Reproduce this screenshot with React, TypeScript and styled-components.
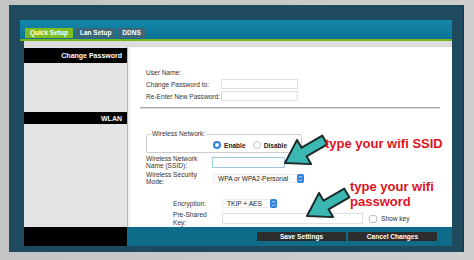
import styled, { createGlobalStyle } from 'styled-components';

const GlobalStyle = createGlobalStyle`
    html, body {
        margin: 0;
        padding: 0;
        background: #c9c9c9;
        font-family: 'Liberation Sans', Arial, sans-serif;
    }
`;

const Page = styled.div`
    width: 474px;
    height: 260px;
    box-sizing: border-box;
    padding: 5px 10px 8px 9px;
    background: linear-gradient(90deg, #c4c4c4, #cfcfcf);
`;

const Frame = styled.div`
    width: 455px;
    height: 247px;
    box-sizing: border-box;
    padding: 15px 11px 6px 11px;
    background: #1f4a5d;
    border-right: 1px solid #16384a;
    display: flex;
    flex-direction: column;
`;

const HeaderBand = styled.div`
    height: 19px;
    box-sizing: border-box;
    padding: 0 0 1px 5px;
    display: flex;
    align-items: flex-end;
    gap: 3px;
    background: linear-gradient(180deg, #1488ab, #0b7294);
`;

const Tab = styled.div<{ $active?: boolean }>`
    height: 10px;
    line-height: 10px;
    padding: 0 ${({ $active }) => ($active ? '5px' : '4px')};
    background: ${({ $active }) => ($active ? '#7fbd1e' : '#3f6676')};
    color: #fff;
    font-size: 6.5px;
    font-weight: bold;
    white-space: nowrap;
`;

const GreenLine = styled.div`
    height: 2px;
    background: #78b41a;
`;

const Strip = styled.div`
    height: 6px;
    margin-left: 4px;
    background: #dcdcdc;
`;

const Body = styled.div`
    height: 180px;
    margin-left: 4px;
    display: flex;
`;

const Sidebar = styled.div`
    width: 103px;
    background: #e4e4e4;
    display: flex;
    flex-direction: column;
`;

const SideHead = styled.div<{ $gap: number; $h: number }>`
    height: ${({ $h }) => $h}px;
    margin-top: ${({ $gap }) => $gap}px;
    background: #000;
    color: #fff;
    font-size: 7px;
    font-weight: bold;
    display: flex;
    align-items: center;
    justify-content: flex-end;
    padding-right: 5px;
`;

const Main = styled.div`
    flex: 1;
    position: relative;
    background: #fff;
    border-left: 1px solid #b8b8b8;
    box-shadow: inset 2px 0 2px rgba(0, 0, 0, 0.08);
    padding-left: 18px;
    display: flex;
    flex-direction: column;
    color: #333;
    font-size: 6.6px;
`;

const Row = styled.div<{ $top: number; $indent?: number; $labelW: number; $h?: number }>`
    margin-top: ${({ $top }) => $top}px;
    margin-left: ${({ $indent }) => $indent ?? 0}px;
    height: ${({ $h }) => $h ?? 10}px;
    display: grid;
    grid-template-columns: ${({ $labelW }) => $labelW}px auto;
    align-items: center;
`;

const Label = styled.div<{ $lh?: number }>`
    line-height: ${({ $lh }) => $lh ?? 7}px;
    white-space: nowrap;
`;

const Field = styled.div<{ $w: number; $h?: number; $focus?: boolean }>`
    width: ${({ $w }) => $w}px;
    height: ${({ $h }) => $h ?? 10}px;
    box-sizing: border-box;
    border: 1px solid ${({ $focus }) => ($focus ? '#9ccbe2' : '#e0e0e0')};
    background: #fff;
`;

const Inline = styled.div`
    display: flex;
    align-items: center;
`;

const Separator = styled.div`
    margin: 6px 12px 0 -6px;
    height: 1px;
    background: #a9a9a9;
    box-shadow: 0 1px 0 #dedede;
`;

const Fieldset = styled.fieldset`
    width: 156px;
    box-sizing: border-box;
    margin: 22px 0 0 0;
    padding: 3px 0 3px 66px;
    border: 1px solid #cdcdcd;
    border-radius: 2px;
    display: flex;
    align-items: center;
    gap: 3px;
`;

const Legend = styled.legend`
    margin-left: -62px;
    padding: 0 1px;
    font-size: 6.6px;
    line-height: 8px;
`;

const RadioDot = styled.span<{ $on?: boolean }>`
    width: 8px;
    height: 8px;
    box-sizing: border-box;
    border-radius: 50%;
    border: ${({ $on }) => ($on ? '2.5px solid #2b7fe3' : '1px solid #c4c4c4')};
    background: #fff;
    margin-left: ${({ $on }) => ($on ? '0' : '4px')};
`;

const RadioText = styled.span`
    font-weight: bold;
    font-size: 6.6px;
    color: #222;
`;

const SelectBox = styled.div<{ $w: number }>`
    width: ${({ $w }) => $w}px;
    height: 9px;
    box-sizing: border-box;
    padding-left: 4px;
    display: flex;
    align-items: center;
    justify-content: space-between;
    border: 1px solid #ececec;
    border-radius: 2px;
    color: #222;
    font-size: 6.6px;
`;

const Stepper = styled.span`
    width: 7px;
    height: 9px;
    margin-right: -1px;
    border-radius: 2px;
    background: #2f80e3;
    display: flex;
`;

const Check = styled.span`
    width: 8px;
    height: 8px;
    box-sizing: border-box;
    margin: 0 4px 0 6px;
    border: 1px solid #c6c6c6;
    border-radius: 2px;
    background: #fafafa;
`;

const Note = styled.div<{ $x: number; $y: number }>`
    position: absolute;
    left: ${({ $x }) => $x}px;
    top: ${({ $y }) => $y}px;
    color: #e2121c;
    font-size: 13px;
    font-weight: bold;
    line-height: 15px;
    white-space: nowrap;
`;

const Overlay = styled.svg`
    position: absolute;
    left: 0;
    top: 0;
    pointer-events: none;
`;

const Footer = styled.div`
    height: 19px;
    margin-left: 4px;
    display: flex;
`;

const FooterLeft = styled.div`
    width: 103px;
    background: #000;
`;

const FooterRight = styled.div`
    flex: 1;
    background: #0e6c89;
    display: flex;
    align-items: center;
    justify-content: flex-end;
    gap: 2px;
    padding-right: 15px;
`;

const Button = styled.div`
    width: 89px;
    height: 9px;
    line-height: 9px;
    background: #2c2c2c;
    color: #fff;
    font-size: 6.6px;
    font-weight: bold;
    text-align: center;
`;

const Arrow = ({ x, y }: { x: number; y: number }) => (
    <polygon
        points="0,0 22,-14 22,-5 46,-5 46,5 22,5 22,14"
        transform={`translate(${x} ${y}) rotate(-30)`}
        fill="#3bb8b1"
        stroke="#1b2b2c"
        strokeWidth="2"
        strokeLinejoin="round"
    />
);

const Select = ({ w, text }: { w: number; text: string }) => (
    <SelectBox $w={w}>
        {text}
        <Stepper>
            <svg width="7" height="9" viewBox="0 0 7 9">
                <path d="M2 3.5 L3.5 2 L5 3.5 M2 5.5 L3.5 7 L5 5.5" stroke="#fff" strokeWidth="0.9" fill="none" />
            </svg>
        </Stepper>
    </SelectBox>
);

export default function App() {
    return (
        <>
            <GlobalStyle />
            <Page>
                <Frame>
                    <HeaderBand>
                        <Tab $active>Quick Setup</Tab>
                        <Tab>Lan Setup</Tab>
                        <Tab>DDNS</Tab>
                    </HeaderBand>
                    <GreenLine />
                    <Strip />
                    <Body>
                        <Sidebar>
                            <SideHead $gap={1} $h={15}>Change Password</SideHead>
                            <SideHead $gap={49} $h={12}>WLAN</SideHead>
                        </Sidebar>
                        <Main>
                            <Row $top={20} $labelW={75}>
                                <Label>User Name:</Label>
                            </Row>
                            <Row $top={2} $labelW={75}>
                                <Label>Change Password to:</Label>
                                <Field $w={77} />
                            </Row>
                            <Row $top={2} $labelW={75}>
                                <Label>Re-Enter New Password:</Label>
                                <Field $w={77} />
                            </Row>
                            <Separator />

                            <Fieldset>
                                <Legend>Wireless Network:</Legend>
                                <RadioDot $on />
                                <RadioText>Enable</RadioText>
                                <RadioDot />
                                <RadioText>Disable</RadioText>
                            </Fieldset>

                            <Row $top={2} $labelW={66} $h={14}>
                                <Label>
                                    Wireless Network
                                    <br />
                                    Name (SSID):
                                </Label>
                                <Field $w={73} $h={11} $focus />
                            </Row>
                            <Row $top={2} $labelW={67} $h={14}>
                                <Label>
                                    Wireless Security
                                    <br />
                                    Mode:
                                </Label>
                                <Select w={91} text="WPA or WPA2-Personal" />
                            </Row>
                            <Row $top={14} $indent={27} $labelW={49} $h={9}>
                                <Label>Encryption:</Label>
                                <Select w={55} text="TKIP + AES" />
                            </Row>
                            <Row $top={2} $indent={27} $labelW={49} $h={17}>
                                <Label $lh={8}>
                                    Pre-Shared
                                    <br />
                                    Key:
                                </Label>
                                <Inline>
                                    <Field $w={141} $h={11} />
                                    <Check />
                                    <span>Show key</span>
                                </Inline>
                            </Row>

                            <Overlay width="325" height="180" viewBox="0 0 325 180">
                                <Arrow x={157} y={116} />
                                <Arrow x={179} y={169} />
                            </Overlay>
                            <Note $x={197} $y={89}>type your wifi SSID</Note>
                            <Note $x={222} $y={132}>
                                type your wifi
                                <br />
                                password
                            </Note>
                        </Main>
                    </Body>
                    <Footer>
                        <FooterLeft />
                        <FooterRight>
                            <Button>Save Settings</Button>
                            <Button>Cancel Changes</Button>
                        </FooterRight>
                    </Footer>
                </Frame>
            </Page>
        </>
    );
}
